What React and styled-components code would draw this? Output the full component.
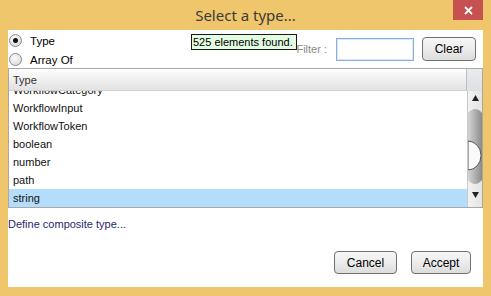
import styled, { createGlobalStyle } from "styled-components";

const GlobalStyle = createGlobalStyle`
  html, body {
    margin: 0;
    padding: 0;
    background: #efc66b;
  }
  * {
    box-sizing: border-box;
  }
`;

const Window = styled.div`
  width: 491px;
  height: 296px;
  background: #efc66b;
  display: flex;
  flex-direction: column;
  font-family: "Liberation Sans", Arial, sans-serif;
  overflow: hidden;
`;

const TitleBar = styled.div`
  height: 30px;
  display: grid;
  grid-template-columns: 1fr auto 1fr;
`;

const Title = styled.div`
  grid-column: 2;
  font-family: "Noto Sans", "Open Sans", sans-serif;
  font-size: 15px;
  line-height: 30px;
  color: #3b3b3b;
`;

const CloseButton = styled.div`
  grid-column: 3;
  justify-self: end;
  align-self: start;
  width: 30px;
  height: 20px;
  margin-right: 8px;
  background: #c75050;
  display: flex;
  align-items: center;
  justify-content: center;
`;

const Client = styled.div`
  flex: 1;
  margin: 0 8px 9px 8px;
  background: #ffffff;
  display: flex;
  flex-direction: column;
`;

const TopBar = styled.div`
  position: relative;
  height: 38px;
  display: flex;
  align-items: center;
  padding: 0 7px 0 1px;
`;

const RadioGroup = styled.div`
  align-self: flex-start;
  padding-top: 1px;
  display: flex;
  flex-direction: column;
`;

const RadioOption = styled.label`
  height: 19px;
  display: flex;
  align-items: center;
  gap: 8px;
  font-size: 11.5px;
  color: #000;
`;

const RadioCircle = styled.span`
  width: 13px;
  height: 13px;
  border-radius: 50%;
  border: 1px solid #8a8a8a;
  background: radial-gradient(circle at 40% 35%, #fbfbfb 0%, #e6e6e6 55%, #cfcfcf 100%);
  display: flex;
  align-items: center;
  justify-content: center;

  &::after {
    content: "";
    width: 5px;
    height: 5px;
    border-radius: 50%;
    background: ${(p) => (p.$checked ? "#111" : "transparent")};
  }
`;

const Tooltip = styled.div`
  position: absolute;
  left: 183px;
  top: 4px;
  height: 16px;
  padding: 0 3px 0 1px;
  border: 1px solid #1a1a1a;
  background: #e3fde3;
  font-size: 11px;
  line-height: 14px;
  color: #000;
  white-space: nowrap;
`;

const FilterLabel = styled.span`
  margin-left: auto;
  margin-right: 9px;
  font-size: 11px;
  color: #8a8a8a;
`;

const FilterInput = styled.input`
  width: 78px;
  height: 23px;
  border: 1px solid #85b1e2;
  box-shadow: inset 0 0 0 1px #d9e8f8;
  outline: none;
  padding: 0 3px;
`;

const Button = styled.button`
  width: ${(p) => p.$width}px;
  height: ${(p) => p.$height || 23}px;
  margin-left: ${(p) => p.$gap || 0}px;
  border: 1px solid #707070;
  border-radius: 4px;
  background: linear-gradient(#f7f7f7 0%, #ececec 50%, #dcdcdc 100%);
  font-family: "Liberation Sans", Arial, sans-serif;
  font-size: 12px;
  color: #000;
  padding: 0;
`;

const TableFrame = styled.div`
  height: 140px;
  border: 1px solid #a8a8a8;
  display: flex;
`;

const TableMain = styled.div`
  flex: 1;
  display: flex;
  flex-direction: column;
  min-width: 0;
`;

const HeaderCell = styled.div`
  height: 22px;
  border-right: 1px solid #bdbdbd;
  border-bottom: 1px solid #d0d0d0;
  background: linear-gradient(#fdfdfd 0%, #f0f0f0 50%, #e2e2e2 100%);
  font-size: 11px;
  line-height: 22px;
  color: #333;
  padding-left: 4px;
`;

const Body = styled.div`
  flex: 1;
  overflow: hidden;
`;

const RowList = styled.div`
  margin-top: -10px;
`;

const Row = styled.div`
  height: 18px;
  line-height: 18px;
  padding-left: 4px;
  font-size: 11px;
  color: #111;
  background: ${(p) => (p.$selected ? "#b3ddfb" : "transparent")};
`;

const ScrollColumn = styled.div`
  width: 15px;
  display: flex;
  flex-direction: column;
  background: #e6e6e6;
`;

const Corner = styled.div`
  height: 22px;
  background: linear-gradient(#e9ebee, #dcdfe3);
`;

const ScrollTrack = styled.div`
  flex: 1;
  border-left: 1px solid #c9c9c9;
  display: flex;
  flex-direction: column;
  align-items: center;
  background: linear-gradient(90deg, #f2f2f2, #e4e4e4);
`;

const Arrow = styled.div`
  height: 14px;
  display: flex;
  align-items: center;
  justify-content: center;
`;

const Status = styled.div`
  margin-top: 9px;
  height: 14px;
  line-height: 14px;
  font-size: 11px;
  color: #262a6a;
`;

const ButtonRow = styled.div`
  margin-top: 20px;
  padding-right: 12px;
  display: flex;
  justify-content: flex-end;
  gap: 14px;
`;

const rows = [
  "WorkflowCategory",
  "WorkflowInput",
  "WorkflowToken",
  "boolean",
  "number",
  "path",
  "string",
];

const Thumb = () => (
  <svg width="14" height="83" viewBox="0 0 14 83">
    <defs>
      <linearGradient id="thumbFill" x1="0" y1="0" x2="1" y2="0">
        <stop offset="0" stopColor="#d4d4d4" />
        <stop offset="0.6" stopColor="#a9a9a9" />
        <stop offset="1" stopColor="#8a8a8a" />
      </linearGradient>
    </defs>
    <path d="M0 8 Q7 0 14 8 L14 75 Q7 83 0 75 Z" fill="url(#thumbFill)" />
    <path d="M0 36 A13 14.5 0 0 1 0 65 Z" fill="#fafafa" stroke="#555" strokeWidth="1" />
  </svg>
);

export default function App() {
  return (
    <>
      <GlobalStyle />
      <Window>
        <TitleBar>
          <Title>Select a type...</Title>
          <CloseButton>
            <svg width="9" height="9" viewBox="0 0 9 9">
              <path d="M1 1 L8 8 M8 1 L1 8" stroke="#fff" strokeWidth="1.8" />
            </svg>
          </CloseButton>
        </TitleBar>
        <Client>
          <TopBar>
            <RadioGroup>
              <RadioOption>
                <RadioCircle $checked />
                Type
              </RadioOption>
              <RadioOption>
                <RadioCircle />
                Array Of
              </RadioOption>
            </RadioGroup>
            <Tooltip>525 elements found.</Tooltip>
            <FilterLabel>Filter :</FilterLabel>
            <FilterInput />
            <Button $width={54} $height={24} $gap={8}>
              Clear
            </Button>
          </TopBar>
          <TableFrame>
            <TableMain>
              <HeaderCell>Type</HeaderCell>
              <Body>
                <RowList>
                  {rows.map((r) => (
                    <Row key={r} $selected={r === "string"}>
                      {r}
                    </Row>
                  ))}
                </RowList>
              </Body>
            </TableMain>
            <ScrollColumn>
              <Corner />
              <ScrollTrack>
                <Arrow>
                  <svg width="7" height="6" viewBox="0 0 7 6">
                    <path d="M3.5 0 L7 6 L0 6 Z" fill="#222" />
                  </svg>
                </Arrow>
                <Thumb />
                <Arrow>
                  <svg width="7" height="6" viewBox="0 0 7 6">
                    <path d="M0 0 L7 0 L3.5 6 Z" fill="#222" />
                  </svg>
                </Arrow>
              </ScrollTrack>
            </ScrollColumn>
          </TableFrame>
          <Status>Define composite type...</Status>
          <ButtonRow>
            <Button $width={63}>Cancel</Button>
            <Button $width={60}>Accept</Button>
          </ButtonRow>
        </Client>
      </Window>
    </>
  );
}
